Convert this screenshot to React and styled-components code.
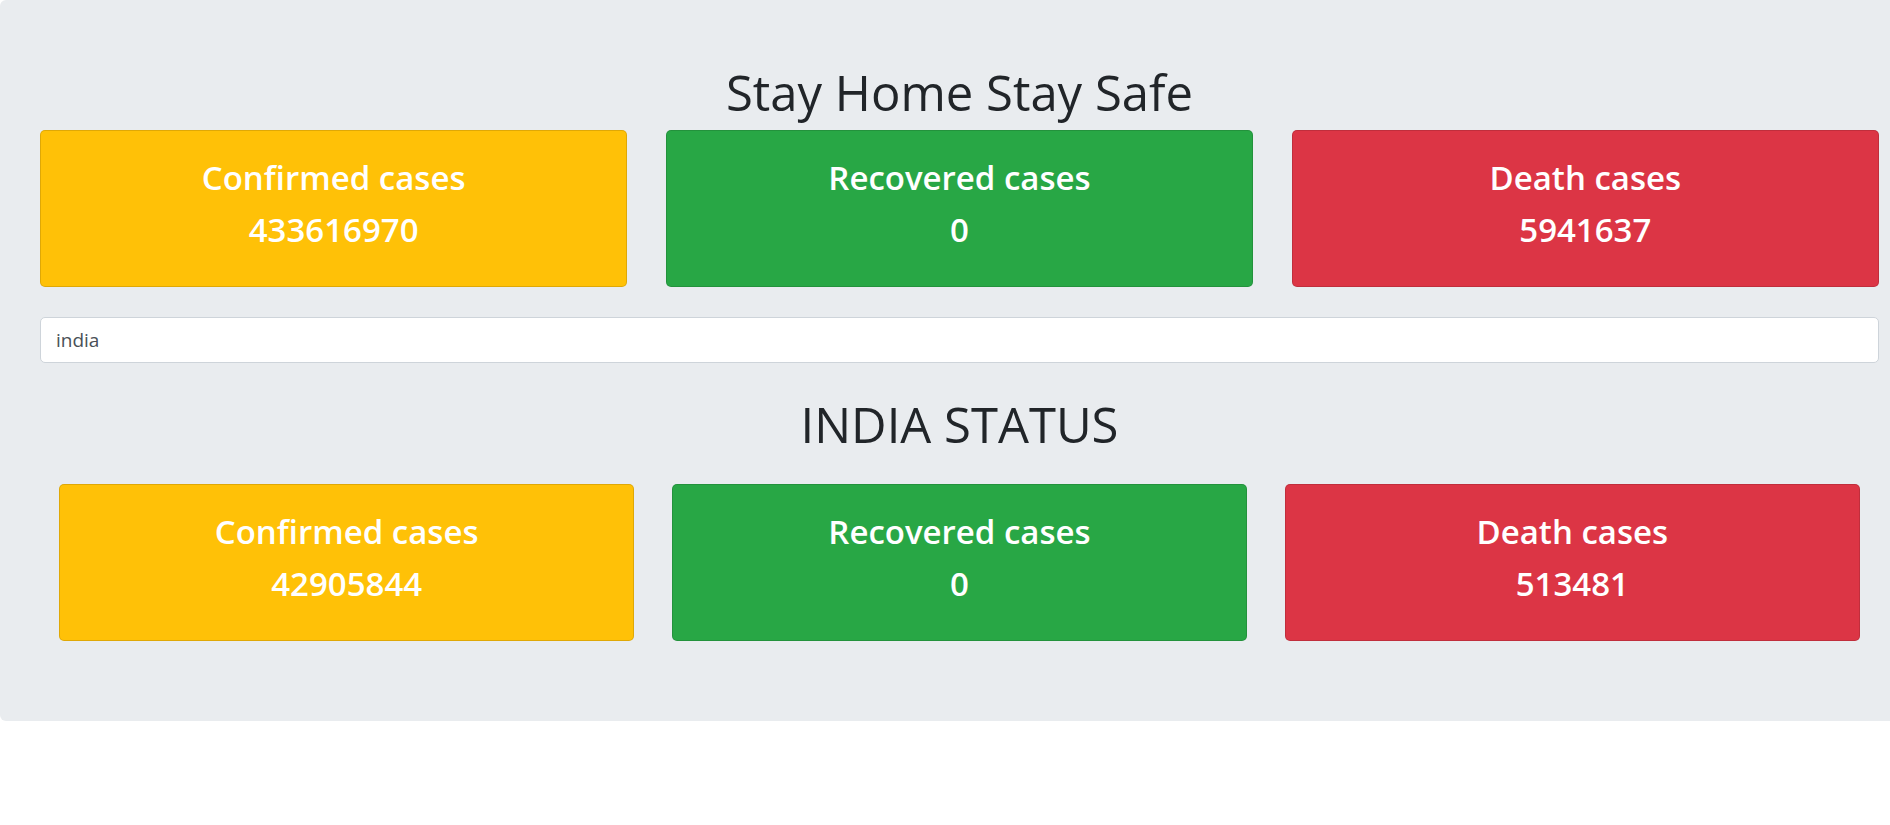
import React from "react";
import styled, { createGlobalStyle } from "styled-components";

const GlobalStyle = createGlobalStyle`
  html, body {
    margin: 0;
    padding: 0;
    overflow-x: hidden;
    background: #fff;
  }
  body {
    font-family: "Open Sans", "Noto Sans", Arial, sans-serif;
    color: #212529;
  }
  * {
    box-sizing: border-box;
  }
`;

const Page = styled.div`
  width: 1920px;
`;

const Jumbotron = styled.div`
  background-color: #e9ecef;
  border-radius: 6px;
  padding: 64px 41px 80px 40px;
`;

const Heading = styled.h1`
  margin: 0;
  font-size: 49px;
  font-weight: 500;
  line-height: 57.6px;
  text-align: center;
  color: #212529;
  margin-bottom: ${(props) => props.gap || "8px"};
`;

const CardRow = styled.div`
  display: grid;
  grid-template-columns: repeat(3, 1fr);
  column-gap: ${(props) => (props.inset ? "37.5px" : "38.5px")};
  padding: 0 ${(props) => (props.inset ? "19px" : "0")};
`;

const Card = styled.div`
  background-color: ${(props) => props.bg};
  border: 1px solid rgba(0, 0, 0, 0.125);
  border-radius: 5px;
  color: #fff;
  text-align: center;
  padding: 27px 24px 26px;
  height: 157px;
`;

const CardLabel = styled.div`
  font-size: 33px;
  font-weight: 600;
  line-height: 40px;
  margin-bottom: 12px;
`;

const CardValue = styled.div`
  font-size: 33px;
  font-weight: 600;
  line-height: 40px;
`;

const SearchInput = styled.input`
  display: block;
  width: 100%;
  height: 46px;
  margin: 30px 0 33px;
  padding: 6px 15px;
  font-family: "Open Sans", "Noto Sans", Arial, sans-serif;
  font-size: 19px;
  color: #495057;
  background-color: #fff;
  border: 1px solid #ced4da;
  border-radius: 5px;
  outline: none;
`;

const StatsCard = ({ label, value, bg }) => (
  <Card bg={bg}>
    <CardLabel>{label}</CardLabel>
    <CardValue>{value}</CardValue>
  </Card>
);

export default function App() {
  const world = { confirmed: 433616970, recovered: 0, deaths: 5941637 };
  const india = { confirmed: 42905844, recovered: 0, deaths: 513481 };
  return (
    <Page>
      <GlobalStyle />
      <Jumbotron>
        <Heading>Stay Home Stay Safe</Heading>
        <CardRow>
          <StatsCard label="Confirmed cases" value={world.confirmed} bg="#ffc107" />
          <StatsCard label="Recovered cases" value={world.recovered} bg="#28a745" />
          <StatsCard label="Death cases" value={world.deaths} bg="#dc3545" />
        </CardRow>
        <SearchInput type="text" defaultValue="india" />
        <Heading gap="31px">INDIA STATUS</Heading>
        <CardRow inset>
          <StatsCard label="Confirmed cases" value={india.confirmed} bg="#ffc107" />
          <StatsCard label="Recovered cases" value={india.recovered} bg="#28a745" />
          <StatsCard label="Death cases" value={india.deaths} bg="#dc3545" />
        </CardRow>
      </Jumbotron>
    </Page>
  );
}
